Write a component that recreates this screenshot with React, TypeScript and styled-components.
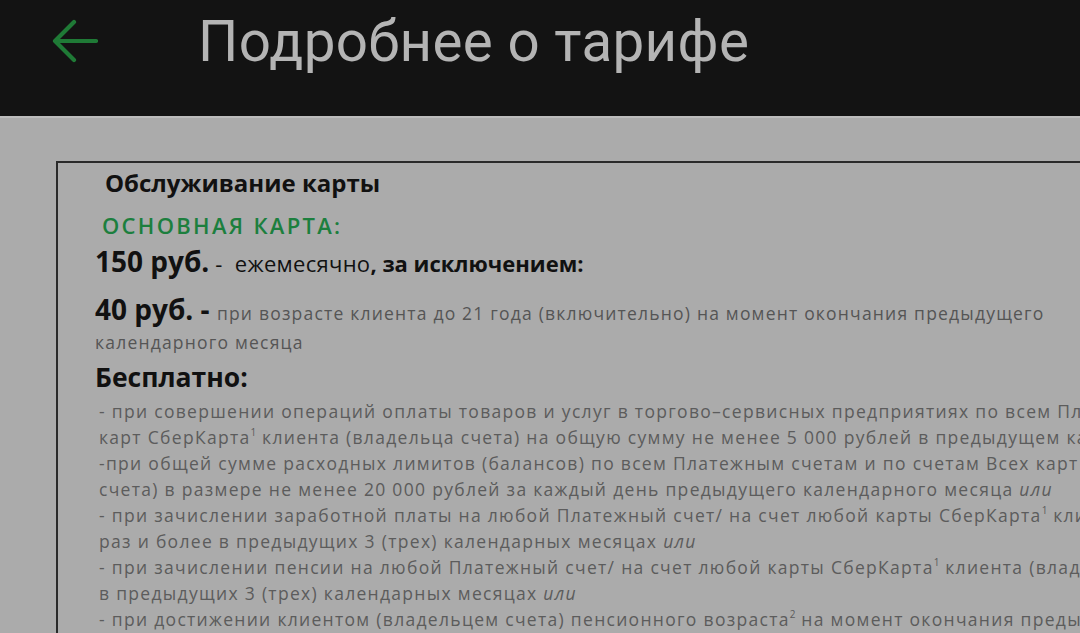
import * as React from 'react';
import styled, { createGlobalStyle } from 'styled-components';

const GlobalStyle = createGlobalStyle`
  html, body {
    margin: 0;
    padding: 0;
    background: #ababab;
    overflow: hidden;
  }
  #root {
    width: 1080px;
    height: 633px;
    overflow: hidden;
  }
`;

const Page = styled.div`
  width: 1080px;
  height: 633px;
  display: flex;
  flex-direction: column;
  overflow: hidden;
`;

const Header = styled.header`
  height: 118px;
  flex-shrink: 0;
  background: #131313;
  border-bottom: 2px solid #bcbcbc;
  display: flex;
  align-items: flex-start;
  padding: 18px 0 0 52px;
  box-sizing: border-box;
`;

const BackButton = styled.button`
  width: 46px;
  height: 46px;
  padding: 0;
  border: none;
  background: transparent;
  display: flex;
  align-items: center;
  justify-content: center;
`;

const Title = styled.h1`
  margin: -6px 0 0 100px;
  font-family: Roboto, 'Noto Sans', sans-serif;
  font-weight: 400;
  font-size: 56.5px;
  line-height: 60px;
  color: #b4b4b4;
  letter-spacing: 0.35px;
`;

const Body = styled.main`
  flex: 1;
  padding: 43px 0 0 56px;
`;

const Card = styled.section`
  width: 1200px;
  height: 600px;
  border: 2px solid #2a2a2a;
  padding: 4px 0 0 37px;
  box-sizing: border-box;
  font-family: 'Open Sans', 'Noto Sans', sans-serif;
  white-space: nowrap;
`;

const CardTitle = styled.div`
  margin-left: 10px;
  font-weight: 700;
  font-size: 24px;
  line-height: 32px;
  color: #111;
`;

const Kind = styled.div`
  margin: 11px 0 0 7px;
  font-weight: 600;
  font-size: 22px;
  line-height: 30px;
  letter-spacing: 2.3px;
  color: #1c7f3e;
`;

const PriceRow = styled.div<{ gap: number; height: number }>`
  margin-top: ${(p) => p.gap}px;
  line-height: ${(p) => p.height}px;
  color: #111;
`;

const Price = styled.span`
  font-weight: 700;
  font-size: 28px;
`;

const Plain = styled.span`
  font-size: 22px;
  letter-spacing: 0.3px;
`;

const Strong = styled.span`
  font-weight: 700;
  font-size: 22px;
`;

const Note = styled.span`
  font-size: 17.5px;
  letter-spacing: 1.2px;
  color: #555;
`;

const NoteLine = styled.div`
  margin-top: -3px;
  font-size: 17.5px;
  line-height: 26px;
  letter-spacing: 1.2px;
  color: #555;
`;

const Free = styled.div`
  margin-top: 5px;
  font-weight: 700;
  font-size: 26.5px;
  line-height: 34px;
  color: #111;
`;

const Conditions = styled.div`
  margin: 4px 0 0 4px;
`;

const Line = styled.div`
  font-size: 17.5px;
  line-height: 26px;
  letter-spacing: 1.3px;
  color: #5c5c5c;
  sup {
    font-size: 10px;
    line-height: 0;
    vertical-align: 8px;
    letter-spacing: 0;
  }
  em {
    font-style: italic;
  }
`;

const ArrowIcon = () => (
  <svg width="46" height="46" viewBox="0 0 46 46" fill="none">
    <path
      d="M44 23H4M22 4L3 23L22 42"
      stroke="#1f7a36"
      strokeWidth="4.2"
      strokeLinecap="round"
      strokeLinejoin="round"
    />
  </svg>
);

const conditions: React.ReactNode[] = [
  <>- при совершении операций оплаты товаров и услуг в торгово–сервисных предприятиях по всем Платежным счетам и по счетам</>,
  <>карт СберКарта<sup>1</sup> клиента (владельца счета) на общую сумму не менее 5 000 рублей в предыдущем календарном месяце</>,
  <>-при общей сумме расходных лимитов (балансов) по всем Платежным счетам и по счетам Всех карт клиента</>,
  <>счета) в размере не менее 20 000 рублей за каждый день предыдущего календарного месяца <em>или</em></>,
  <>- при зачислении заработной платы на любой Платежный счет/ на счет любой карты СберКарта<sup>1</sup> клиента</>,
  <>раз и более в предыдущих 3 (трех) календарных месяцах <em>или</em></>,
  <>- при зачислении пенсии на любой Платежный счет/ на счет любой карты СберКарта<sup>1</sup> клиента (владельца счета)</>,
  <>в предыдущих 3 (трех) календарных месяцах <em>или</em></>,
  <>- при достижении клиентом (владельцем счета) пенсионного возраста<sup>2</sup> на момент окончания предыдущего месяца</>,
];

export default function App() {
  return (
    <Page>
      <GlobalStyle />
      <Header>
        <BackButton aria-label="Назад">
          <ArrowIcon />
        </BackButton>
        <Title>Подробнее о тарифе</Title>
      </Header>
      <Body>
        <Card>
          <CardTitle>Обслуживание карты</CardTitle>
          <Kind>ОСНОВНАЯ КАРТА:</Kind>
          <PriceRow gap={1} height={40}>
            <Price>150 руб.</Price>
            <Plain> - {'\u00a0'}ежемесячно</Plain>
            <Strong>, за исключением:</Strong>
          </PriceRow>
          <PriceRow gap={5} height={36}>
            <Price>40 руб. - </Price>
            <Note>при возрасте клиента до 21 года (включительно) на момент окончания предыдущего</Note>
          </PriceRow>
          <NoteLine>календарного месяца</NoteLine>
          <Free>Бесплатно:</Free>
          <Conditions>
            {conditions.map((c, i) => (
              <Line key={i}>{c}</Line>
            ))}
          </Conditions>
        </Card>
      </Body>
    </Page>
  );
}
